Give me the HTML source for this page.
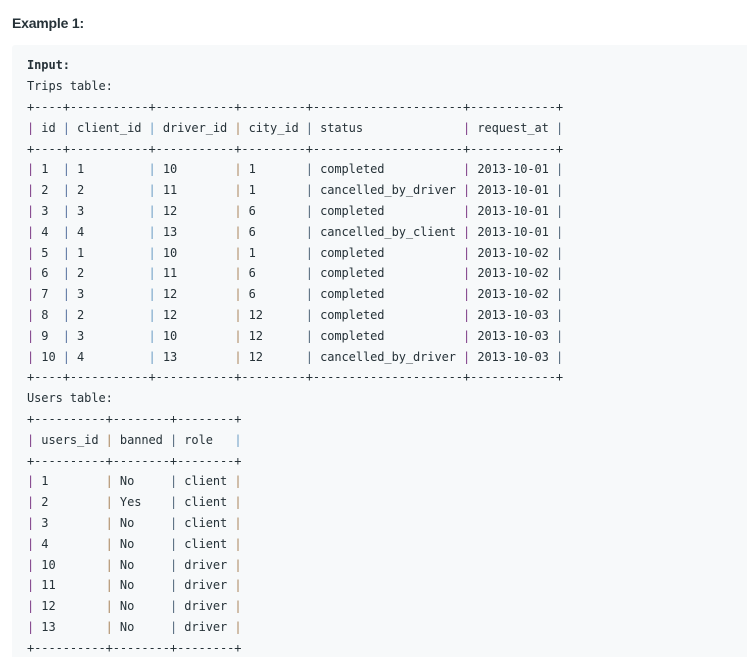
<!DOCTYPE html>
<html>
<head>
<meta charset="utf-8">
<style>
html,body{margin:0;padding:0;background:#fff;width:747px;height:657px;overflow:hidden}
h4{position:absolute;left:12px;top:13px;margin:0;font:bold 14px/20px "Liberation Sans",sans-serif;letter-spacing:-.2px;color:#263238}
#box{position:absolute;left:12px;top:45px;width:735px;height:612px;background:#f7f9fa;border-radius:3px 0 0 0}
pre{position:absolute;left:15px;top:10.5px;margin:0;font:12px/20.8px "DejaVu Sans Mono",monospace;letter-spacing:-.078px;color:#263238}
b{font-weight:bold;position:relative;top:-1px}
i{font-style:normal}
.p{color:#7d3a85}.b{color:#56719f}.l{color:#6a9cc4}.o{color:#a8845a}.d{color:#4f6478}
</style>
</head>
<body>
<h4>Example 1:</h4>
<div id="box"><pre><b>Input:</b>
Trips table:
+----+-----------+-----------+---------+---------------------+------------+
<i class="p">|</i> id <i class="b">|</i> client_id <i class="l">|</i> driver_id <i class="o">|</i> city_id <i class="d">|</i> status              <i class="p">|</i> request_at <i class="d">|</i>
+----+-----------+-----------+---------+---------------------+------------+
<i class="p">|</i> 1  <i class="b">|</i> 1         <i class="l">|</i> 10        <i class="o">|</i> 1       <i class="d">|</i> completed           <i class="p">|</i> 2013-10-01 <i class="d">|</i>
<i class="p">|</i> 2  <i class="b">|</i> 2         <i class="l">|</i> 11        <i class="o">|</i> 1       <i class="d">|</i> cancelled_by_driver <i class="p">|</i> 2013-10-01 <i class="d">|</i>
<i class="p">|</i> 3  <i class="b">|</i> 3         <i class="l">|</i> 12        <i class="o">|</i> 6       <i class="d">|</i> completed           <i class="p">|</i> 2013-10-01 <i class="d">|</i>
<i class="p">|</i> 4  <i class="b">|</i> 4         <i class="l">|</i> 13        <i class="o">|</i> 6       <i class="d">|</i> cancelled_by_client <i class="p">|</i> 2013-10-01 <i class="d">|</i>
<i class="p">|</i> 5  <i class="b">|</i> 1         <i class="l">|</i> 10        <i class="o">|</i> 1       <i class="d">|</i> completed           <i class="p">|</i> 2013-10-02 <i class="d">|</i>
<i class="p">|</i> 6  <i class="b">|</i> 2         <i class="l">|</i> 11        <i class="o">|</i> 6       <i class="d">|</i> completed           <i class="p">|</i> 2013-10-02 <i class="d">|</i>
<i class="p">|</i> 7  <i class="b">|</i> 3         <i class="l">|</i> 12        <i class="o">|</i> 6       <i class="d">|</i> completed           <i class="p">|</i> 2013-10-02 <i class="d">|</i>
<i class="p">|</i> 8  <i class="b">|</i> 2         <i class="l">|</i> 12        <i class="o">|</i> 12      <i class="d">|</i> completed           <i class="p">|</i> 2013-10-03 <i class="d">|</i>
<i class="p">|</i> 9  <i class="b">|</i> 3         <i class="l">|</i> 10        <i class="o">|</i> 12      <i class="d">|</i> completed           <i class="p">|</i> 2013-10-03 <i class="d">|</i>
<i class="p">|</i> 10 <i class="b">|</i> 4         <i class="l">|</i> 13        <i class="o">|</i> 12      <i class="d">|</i> cancelled_by_driver <i class="p">|</i> 2013-10-03 <i class="d">|</i>
+----+-----------+-----------+---------+---------------------+------------+
Users table:
+----------+--------+--------+
<i class="p">|</i> users_id <i class="o">|</i> banned <i class="d">|</i> role   <i class="l">|</i>
+----------+--------+--------+
<i class="p">|</i> 1        <i class="o">|</i> No     <i class="d">|</i> client <i class="o">|</i>
<i class="p">|</i> 2        <i class="o">|</i> Yes    <i class="d">|</i> client <i class="o">|</i>
<i class="p">|</i> 3        <i class="o">|</i> No     <i class="d">|</i> client <i class="o">|</i>
<i class="p">|</i> 4        <i class="o">|</i> No     <i class="d">|</i> client <i class="o">|</i>
<i class="p">|</i> 10       <i class="o">|</i> No     <i class="d">|</i> driver <i class="o">|</i>
<i class="p">|</i> 11       <i class="o">|</i> No     <i class="d">|</i> driver <i class="o">|</i>
<i class="p">|</i> 12       <i class="o">|</i> No     <i class="d">|</i> driver <i class="o">|</i>
<i class="p">|</i> 13       <i class="o">|</i> No     <i class="d">|</i> driver <i class="o">|</i>
+----------+--------+--------+</pre></div>
</body>
</html>
